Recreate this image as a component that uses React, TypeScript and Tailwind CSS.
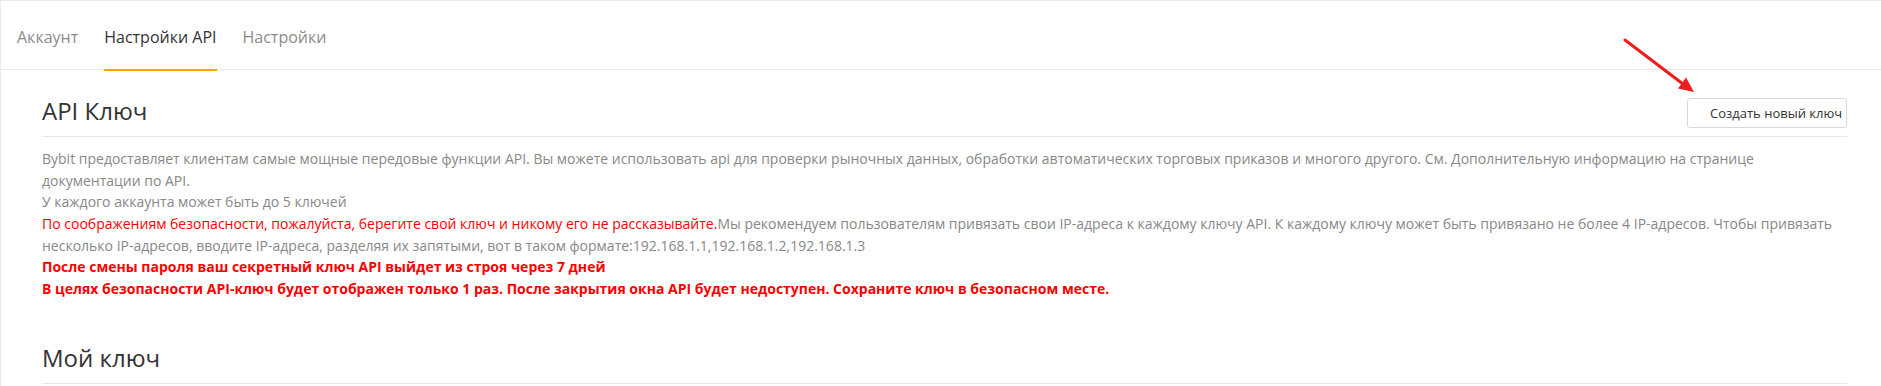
import React from "react";

function Arrow() {
  return (
    <svg
      className="absolute left-[1610px] top-[30px] pointer-events-none"
      width="100"
      height="80"
      viewBox="1610 30 100 80"
    >
      <line x1="1624" y1="39" x2="1682" y2="83" stroke="#ee1c1c" strokeWidth="3" strokeLinecap="round" />
      <polygon points="1693,91 1677,87.5 1685,76.5" fill="#ee1c1c" />
    </svg>
  );
}

export default function App() {
  return (
    <div className="relative w-[1881px] h-[386px] overflow-hidden bg-white border-l border-t border-[#e9e9e9] font-['Open_Sans',sans-serif]">
      {/* Tabs */}
      <div className="flex h-[69px] gap-[26px] pl-[16px] border-b border-[#e8e8e8] text-[16px] leading-[24px]">
        <div className="h-[70px] pt-[24px] text-[#8c8c8c]">Аккаунт</div>
        <div className="h-[70px] pt-[24px] text-[#333333] border-b-2 border-[#f7a600]">Настройки API</div>
        <div className="h-[70px] pt-[24px] text-[#8c8c8c]">Настройки</div>
      </div>

      <div className="pl-[41px] pr-[34px]">
        {/* Header */}
        <div className="flex justify-between items-start pt-[26px] pb-[8px] border-b border-[#e8e8e8]">
          <h2 className="text-[24px] leading-[30px] text-[#333333] font-normal">API Ключ</h2>
          <button className="mt-[2px] w-[160px] h-[30px] pl-[22px] pr-[8px] text-left whitespace-nowrap border border-[#d9d9d9] rounded-[3px] text-[13px] leading-[18px] text-[#333333] bg-white">
            Создать новый ключ
          </button>
        </div>

        {/* Description */}
        <div className="pt-[11px] mr-[-30px] text-[14px] leading-[21.67px] text-[#888888] whitespace-nowrap">
          <p>
            Bybit предоставляет клиентам самые мощные передовые функции API. Вы можете использовать api для проверки рыночных данных, обработки автоматических торговых приказов и многого другого. См. Дополнительную информацию на странице
          </p>
          <p>документации по API.</p>
          <p>У каждого аккаунта может быть до 5 ключей</p>
          <p>
            <span className="text-[#ff0000]">По соображениям безопасности, пожалуйста, берегите свой ключ и никому его не рассказывайте.</span>
            <span>
              Мы рекомендуем пользователям привязать свои IP-адреса к каждому ключу API. К каждому ключу может быть привязано не более 4 IP-адресов. Чтобы привязать
            </span>
          </p>
          <p>несколько IP-адресов, вводите IP-адреса, разделяя их запятыми, вот в таком формате:192.168.1.1,192.168.1.2,192.168.1.3</p>
          <p className="font-bold text-[#ff0000]">После смены пароля ваш секретный ключ API выйдет из строя через 7 дней</p>
          <p className="font-bold text-[#ff0000]">
            В целях безопасности API-ключ будет отображен только 1 раз. После закрытия окна API будет недоступен. Сохраните ключ в безопасном месте.
          </p>
        </div>

        {/* My keys */}
        <div className="mt-[43px] pb-[10px] border-b border-[#e8e8e8]">
          <h2 className="text-[24px] leading-[30px] text-[#333333] font-normal">Мой ключ</h2>
        </div>
      </div>

      <Arrow />
    </div>
  );
}
